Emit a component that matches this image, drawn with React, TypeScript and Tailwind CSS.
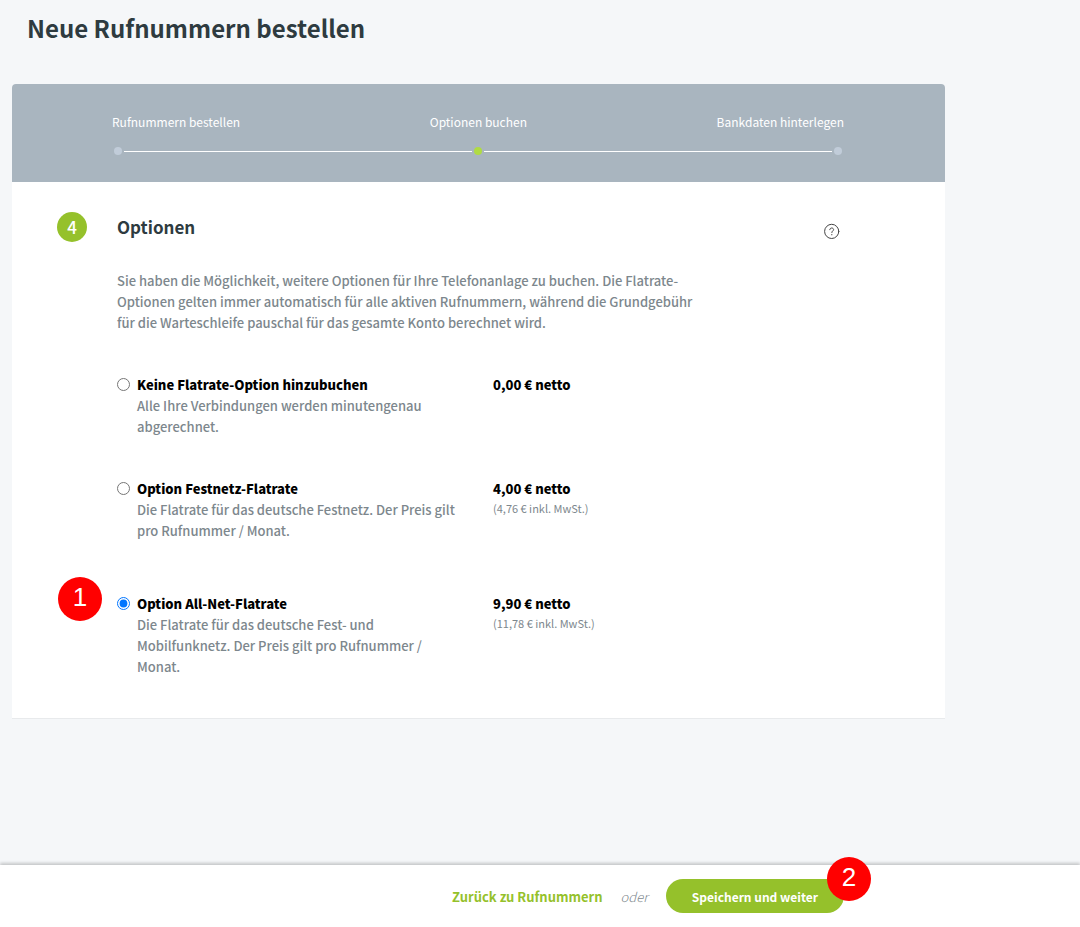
import { useState } from 'react';

interface FlatrateOption {
  id: string;
  title: string;
  description: string;
  price: string;
  gross?: string;
  marker?: string;
}

const STEPS = ['Rufnummern bestellen', 'Optionen buchen', 'Bankdaten hinterlegen'];
const ACTIVE_STEP = 1;

const OPTIONS: FlatrateOption[] = [
  {
    id: 'none',
    title: 'Keine Flatrate-Option hinzubuchen',
    description: 'Alle Ihre Verbindungen werden minutengenau abgerechnet.',
    price: '0,00 € netto',
  },
  {
    id: 'festnetz',
    title: 'Option Festnetz-Flatrate',
    description: 'Die Flatrate für das deutsche Festnetz. Der Preis gilt pro Rufnummer / Monat.',
    price: '4,00 € netto',
    gross: '(4,76 € inkl. MwSt.)',
  },
  {
    id: 'allnet',
    title: 'Option All-Net-Flatrate',
    description: 'Die Flatrate für das deutsche Fest- und Mobilfunknetz. Der Preis gilt pro Rufnummer / Monat.',
    price: '9,90 € netto',
    gross: '(11,78 € inkl. MwSt.)',
    marker: '1',
  },
];

function Marker({ label, className }: { label: string; className: string }) {
  return (
    <span
      className={`absolute flex h-11 w-11 justify-center rounded-full bg-[#ff0000] font-['Liberation_Sans',sans-serif] text-[26px] leading-[40px] text-white ${className}`}
    >
      {label}
    </span>
  );
}

function StepDot({ active }: { active: boolean }) {
  return <span className={`h-2 w-2 shrink-0 rounded-full ${active ? 'bg-[#b0db43]' : 'bg-[#c1ccd9]'}`} />;
}

function Stepper() {
  return (
    <div className="rounded-t bg-[#a9b5bf] pt-[27px] pr-[101px] pb-[27px] pl-[100px]">
      <ol className="flex justify-between text-[12px] leading-[21px] font-normal text-white">
        {STEPS.map((step, i) => (
          <li key={step} aria-current={i === ACTIVE_STEP ? 'step' : undefined}>
            {step}
          </li>
        ))}
      </ol>
      <div className="mt-[15px] flex items-center gap-[2px] px-[2px]">
        <StepDot active={ACTIVE_STEP === 0} />
        <span className="h-px flex-1 bg-white" />
        <StepDot active={ACTIVE_STEP === 1} />
        <span className="h-px flex-1 bg-white" />
        <StepDot active={ACTIVE_STEP === 2} />
      </div>
    </div>
  );
}

export default function App() {
  const [selected, setSelected] = useState('allnet');

  return (
    <div className="flex min-h-screen flex-col bg-[#f5f7f9] font-['Noto_Sans_CJK_SC',sans-serif] text-[13px] leading-[21px] font-medium text-[#7d878d]">
      <main className="flex-1 px-3">
        <h1 className="px-[15px] pt-3 pb-10 text-[24px] leading-8 font-bold text-[#2e3b40]">
          Neue Rufnummern bestellen
        </h1>

        <section className="max-w-[933px] rounded-t border-b border-[#e8eaec] bg-white">
          <Stepper />

          <div className="flex gap-[30px] pt-[30px] pr-[105px] pb-[41px] pl-[45px]">
            <span className="flex h-[30px] w-[30px] shrink-0 justify-center rounded-full bg-[#95c12b] text-[17px] leading-[29px] text-white">
              4
            </span>

            <div className="min-w-0 flex-1">
              <div className="flex items-start justify-between">
                <h2 className="text-[17px] leading-[30px] font-bold text-[#2e3b40]">Optionen</h2>
                <button type="button" aria-label="Hilfe" className="mt-[11px]">
                  <svg width="16" height="16" viewBox="0 0 16 16" fill="none" stroke="#444" strokeLinecap="round">
                    <circle cx="7.7" cy="8.4" r="7.1" strokeWidth="1" />
                    <path d="M5.8 6.7C5.9 5.6 6.7 5 7.7 5s1.9.6 1.9 1.6c0 1.2-1.8 1.4-1.8 2.9" strokeWidth="1" />
                    <path d="M7.8 11.6v.1" strokeWidth="1.2" />
                  </svg>
                </button>
              </div>

              <p className="mt-7 max-w-[590px]">
                Sie haben die Möglichkeit, weitere Optionen für Ihre Telefonanlage zu buchen. Die Flatrate-Optionen
                gelten immer automatisch für alle aktiven Rufnummern, während die Grundgebühr für die Warteschleife
                pauschal für das gesamte Konto berechnet wird.
              </p>

              <div className="mt-[41px] flex flex-col gap-[41px]">
                {OPTIONS.map((option) => (
                  <div key={option.id} className="relative flex items-start">
                    {option.marker && <Marker label={option.marker} className="top-[-16px] left-[-59px]" />}
                    <input
                      id={option.id}
                      type="radio"
                      name="flatrate"
                      className="mt-1 h-[13px] w-[13px] shrink-0"
                      checked={selected === option.id}
                      onChange={() => setSelected(option.id)}
                    />
                    <div className="ml-[7px] w-[326px]">
                      <label htmlFor={option.id} className="block font-black text-black">
                        {option.title}
                      </label>
                      <p>{option.description}</p>
                    </div>
                    <div className={option.gross ? 'ml-[30px] pb-[34px]' : 'ml-[30px]'}>
                      <p className="font-black text-black">{option.price}</p>
                      {option.gross && <p className="text-[11px] leading-[19px] font-normal">{option.gross}</p>}
                    </div>
                  </div>
                ))}
              </div>
            </div>
          </div>
        </section>
      </main>

      <footer className="bg-white shadow-[0_-2px_3px_rgba(0,0,0,0.2)]">
        <div className="flex max-w-[945px] items-center justify-end gap-[18px] py-[14px] pr-[101px]">
          <a href="#rufnummern" className="font-bold text-[#95c12b]">
            Zurück zu Rufnummern
          </a>
          <span className="font-light italic">oder</span>
          <div className="relative">
            <button
              type="button"
              className="h-[34px] rounded-full bg-[#95c12b] px-[26px] text-[12px] font-bold text-white"
            >
              Speichern und weiter
            </button>
            <Marker label="2" className="top-[-22px] right-[-27px]" />
          </div>
        </div>
      </footer>
    </div>
  );
}
